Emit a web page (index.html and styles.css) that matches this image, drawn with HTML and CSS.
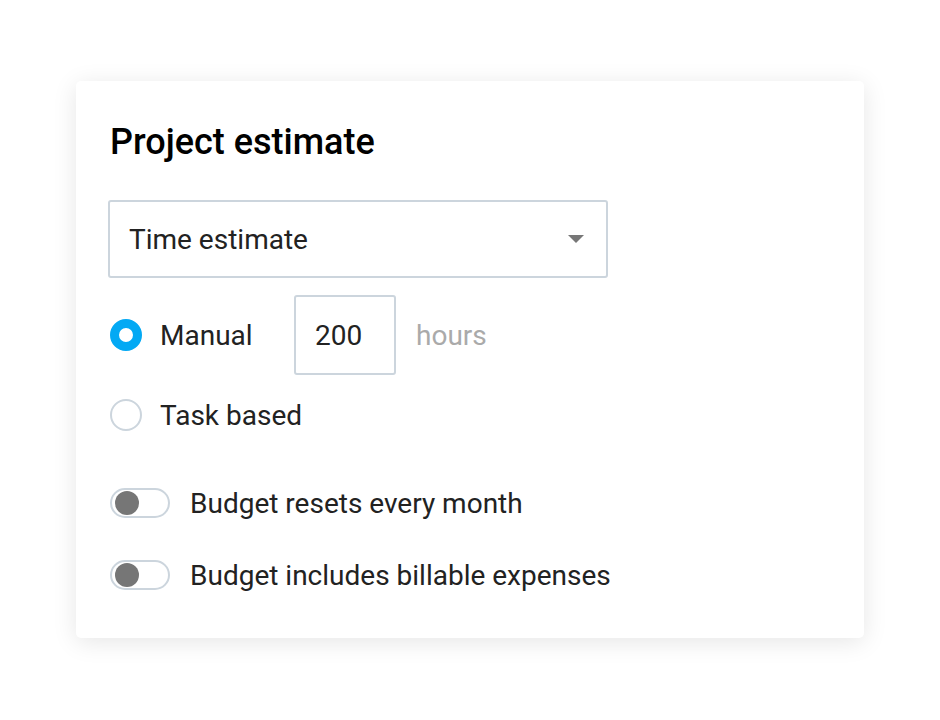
FILE: index.html
```html
<!DOCTYPE html>
<html>
<head>
<meta charset="utf-8">
<link rel="stylesheet" href="styles.css">
</head>
<body>
<div class="card">
  <h1 class="title">Project estimate</h1>
  <div class="select">
    <span>Time estimate</span>
    <span class="caret"></span>
  </div>
  <div class="radio-row">
    <span class="radio checked"></span>
    <span class="label fixed">Manual</span>
    <div class="num">200</div>
    <span class="unit">hours</span>
  </div>
  <div class="radio-row second">
    <span class="radio"></span>
    <span class="label">Task based</span>
  </div>
  <div class="toggle-row first">
    <span class="toggle"><span class="knob"></span></span>
    <span class="tlabel">Budget resets every month</span>
  </div>
  <div class="toggle-row">
    <span class="toggle"><span class="knob"></span></span>
    <span class="tlabel">Budget includes billable expenses</span>
  </div>
</div>
</body>
</html>
```
FILE: styles.css
```css
html, body {
  margin: 0;
  padding: 0;
  background: #ffffff;
  font-family: Roboto, "Liberation Sans", sans-serif;
  color: #222222;
}
body {
  padding: 81px 0 82px 0;
}
.card {
  margin: 0 0 0 76px;
  width: 788px;
  height: 557px;
  box-sizing: border-box;
  padding: 0 34px;
  background: #fff;
  border-radius: 5px;
  box-shadow: 0 4px 24px rgba(0, 0, 0, 0.1);
  display: flow-root;
}
.title {
  margin: 39px 0 0 0;
  font-size: 36px;
  font-weight: 500;
  line-height: 44px;
  color: #000;
}
.select {
  margin: 36px 0 0 -2px;
  width: 500px;
  height: 78px;
  box-sizing: border-box;
  border: 2px solid #ccd5dd;
  border-radius: 3px;
  display: flex;
  align-items: center;
  justify-content: space-between;
  padding: 0 22px 0 19px;
  font-size: 28px;
}
.caret {
  width: 0;
  height: 0;
  border-left: 8px solid transparent;
  border-right: 8px solid transparent;
  border-top: 8px solid #777;
}
.radio-row {
  display: flex;
  align-items: center;
  margin-top: 17px;
  height: 80px;
}
.radio-row.second {
  margin-top: 0;
}
.radio {
  flex: none;
  width: 32px;
  height: 32px;
  box-sizing: border-box;
  border-radius: 50%;
  border: 2px solid #ccd5dd;
  margin-right: 18px;
}
.radio.checked {
  border: 9px solid #03a9f4;
}
.label {
  font-size: 28px;
  white-space: nowrap;
}
.label.fixed {
  width: 134px;
}
.num {
  width: 102px;
  height: 80px;
  box-sizing: border-box;
  border: 2px solid #ccd5dd;
  border-radius: 3px;
  display: flex;
  align-items: center;
  padding-left: 19px;
  font-size: 28px;
  margin-right: 20px;
}
.unit {
  font-size: 28px;
  color: #aaaaaa;
}
.toggle-row {
  display: flex;
  align-items: center;
  height: 30px;
  margin-top: 42px;
}
.toggle-row.first {
  margin-top: 33px;
}
.toggle {
  flex: none;
  width: 60px;
  height: 30px;
  box-sizing: border-box;
  border: 2px solid #ccd5dd;
  border-radius: 15px;
  display: flex;
  align-items: center;
  padding-left: 3px;
  margin-right: 20px;
}
.knob {
  width: 24px;
  height: 24px;
  border-radius: 50%;
  background: #767676;
}
.tlabel {
  font-size: 28px;
  white-space: nowrap;
}
```
